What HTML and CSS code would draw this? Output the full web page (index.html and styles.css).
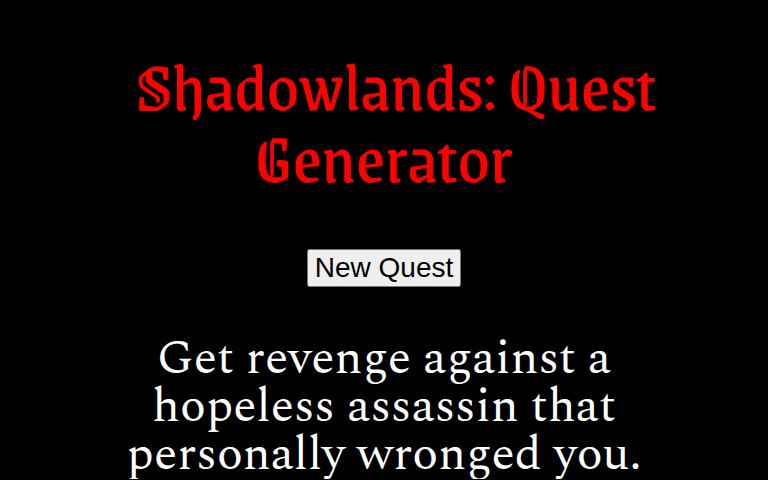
FILE: index.html
```html
<!DOCTYPE html>
<html lang="en">
<head>
  <meta charset="UTF-8">
  <meta name="viewport" content="width=device-width, initial-scale=1.0">
  <title>Shadowlands: Quest Generator</title>
  <link rel="stylesheet" href="styles.css">
</head>
<body>
  <main class="container">
    <h1 class="title">Shadowlands: Quest Generator</h1>
    <button class="quest-btn" type="button">New Quest</button>
    <p class="quest">Get revenge against a hopeless assassin that personally wronged you.</p>
  </main>
</body>
</html>
```

FILE: styles.css
```css
* {
  box-sizing: border-box;
}

body {
  margin: 0;
  background: #000;
  color: #fff;
}

.container {
  display: flex;
  flex-direction: column;
  align-items: center;
  padding: 48px 12% 0;
  text-align: center;
}

.title {
  margin: 0 0 57px;
  color: #f00;
  font-family: "Grenze Gotisch", "Liberation Serif", serif;
  font-size: 72px;
  font-weight: 400;
  line-height: 72px;
  text-indent: 24px;
}

.quest-btn {
  padding: 1px 6px;
  font-family: "Liberation Sans", Arial, sans-serif;
  font-size: 28px;
}

.quest {
  margin: 48px 0 0;
  font-family: "Spectral", "Liberation Serif", serif;
  font-size: 48px;
  line-height: 48px;
}
```
